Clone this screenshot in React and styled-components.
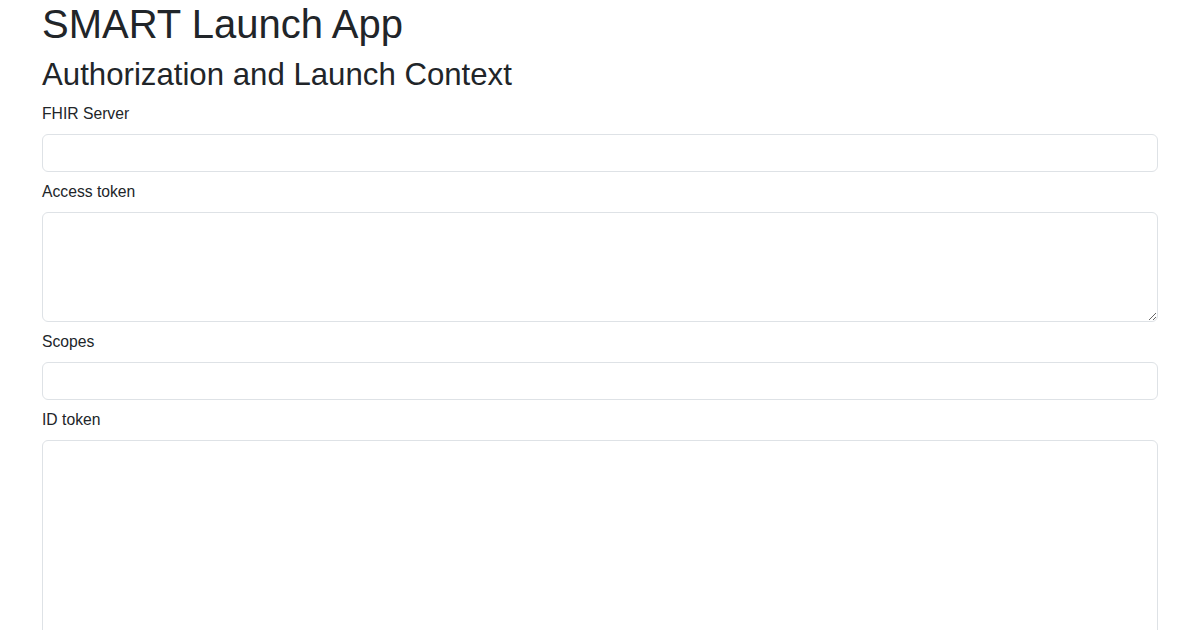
import React from "react";
import styled, { createGlobalStyle } from "styled-components";

const GlobalStyle = createGlobalStyle`
  *, *::before, *::after { box-sizing: border-box; }
  body {
    margin: 0;
    background: #fff;
    color: #212529;
    font-family: "Liberation Sans", Arial, sans-serif;
    font-size: 16px;
    line-height: 1.5;
  }
`;

const Container = styled.div`
  width: 100%;
  max-width: 1140px;
  margin: 0 auto;
  padding: 0 12px;
`;

const Title = styled.h1`
  margin: 0 0 8px;
  font-size: 40px;
  font-weight: 500;
  line-height: 48px;
`;

const Subtitle = styled.h2`
  margin: 0 0 8px;
  font-size: 31.2px;
  font-weight: 500;
  line-height: 38.4px;
`;

const Field = styled.div`
  margin-bottom: 8px;
`;

const Label = styled.label`
  display: inline-block;
  margin-bottom: 8px;
  font-size: 15.7px;
  line-height: 24px;
`;

const Input = styled.input`
  display: block;
  width: 100%;
  height: 38px;
  padding: 6px 12px;
  font: inherit;
  color: #212529;
  background: #fff;
  border: 1px solid #dee2e6;
  border-radius: 6px;
  outline: none;
`;

const TextArea = styled.textarea`
  display: block;
  width: 100%;
  height: ${(props) => props.rows * 24 + 14}px;
  padding: 6px 12px;
  font: inherit;
  color: #212529;
  background: #fff;
  border: 1px solid #dee2e6;
  border-radius: 6px;
  outline: none;
  resize: vertical;
`;

export default function App() {
  return (
    <Container>
      <GlobalStyle />
      <Title>SMART Launch App</Title>
      <Subtitle>Authorization and Launch Context</Subtitle>
      <Field>
        <Label htmlFor="fhir">FHIR Server</Label>
        <Input id="fhir" type="text" />
      </Field>
      <Field>
        <Label htmlFor="access">Access token</Label>
        <TextArea id="access" rows={4} />
      </Field>
      <Field>
        <Label htmlFor="scopes">Scopes</Label>
        <Input id="scopes" type="text" />
      </Field>
      <Field>
        <Label htmlFor="idtoken">ID token</Label>
        <TextArea id="idtoken" rows={10} />
      </Field>
    </Container>
  );
}
